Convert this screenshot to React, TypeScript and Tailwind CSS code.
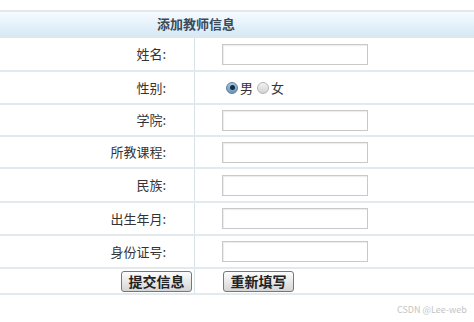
import React from "react";

const font = { fontFamily: '"Noto Sans CJK SC", "Noto Sans", sans-serif' };

function Row({ label, children, h = "h-[33px]" }: { label: string; children: React.ReactNode; h?: string }) {
  return (
    <div className={`flex ${h} border-b-2 border-[#e3eaee]`}>
      <div className="w-[195px] shrink-0 flex items-center justify-end pr-[28px] text-[13px] text-[#333] border-r border-[#d7e3ea]">
        {label}
      </div>
      <div className="flex-1 flex items-center pl-[27px]">{children}</div>
    </div>
  );
}

function Input() {
  return (
    <div className="w-[146px] h-[21px] border border-[#c9c9c9] bg-white shadow-[inset_1px_1px_1px_rgba(0,0,0,0.08)]" />
  );
}

function Radio({ checked }: { checked?: boolean }) {
  return checked ? (
    <span className="w-[12px] h-[12px] rounded-full bg-gradient-to-b from-[#a9c6dc] to-[#6f95b6] border border-[#5d7e9b] flex items-center justify-center">
      <span className="w-[5px] h-[5px] rounded-full bg-[#0f2f4f]" />
    </span>
  ) : (
    <span className="w-[12px] h-[12px] rounded-full bg-gradient-to-b from-[#f2f2f2] to-[#d3d3d3] border border-[#b5b5b5]" />
  );
}

function Btn({ text }: { text: string }) {
  return (
    <button className="w-[71px] h-[21px] rounded-[3px] border border-[#777] bg-gradient-to-b from-[#fdfdfd] to-[#d5d5d5] text-[14px] font-bold text-[#222] leading-none flex items-center justify-center">
      {text}
    </button>
  );
}

export default function App() {
  return (
    <div className="w-[474px] h-[322px] bg-white pt-[10px] relative" style={font}>
      <div className="border-t-2 border-[#e2e8ec]">
        <div className="h-[26px] bg-gradient-to-b from-[#f6fbfe] to-[#d5e9f6] border-b-2 border-[#dfe7ec] flex items-center pl-[157px] text-[13px] font-bold text-[#3b4a58]">
          添加教师信息
        </div>
        <Row label="姓名:" h="h-[34px]"><Input /></Row>
        <Row label="性别:">
          <div className="flex items-center gap-[2px] pl-[4px] text-[13px] text-[#333]">
            <Radio checked />
            <span className="mr-[2px]">男</span>
            <Radio />
            <span>女</span>
          </div>
        </Row>
        <Row label="学院:" h="h-[32px]"><Input /></Row>
        <Row label="所教课程:" h="h-[32px]"><Input /></Row>
        <Row label="民族:" h="h-[34px]"><Input /></Row>
        <Row label="出生年月:"><Input /></Row>
        <Row label="身份证号:"><Input /></Row>
        <div className="flex h-[26px] border-b-2 border-[#e3eaee]">
          <div className="w-[195px] shrink-0 flex items-center justify-end pr-[2px] border-r border-[#d7e3ea]">
            <Btn text="提交信息" />
          </div>
          <div className="flex-1 flex items-center pl-[28px]">
            <Btn text="重新填写" />
          </div>
        </div>
      </div>
      <div className="absolute left-[397px] top-[303px] text-[9px] text-[#c4c4c4]">CSDN @Lee-web</div>
    </div>
  );
}
